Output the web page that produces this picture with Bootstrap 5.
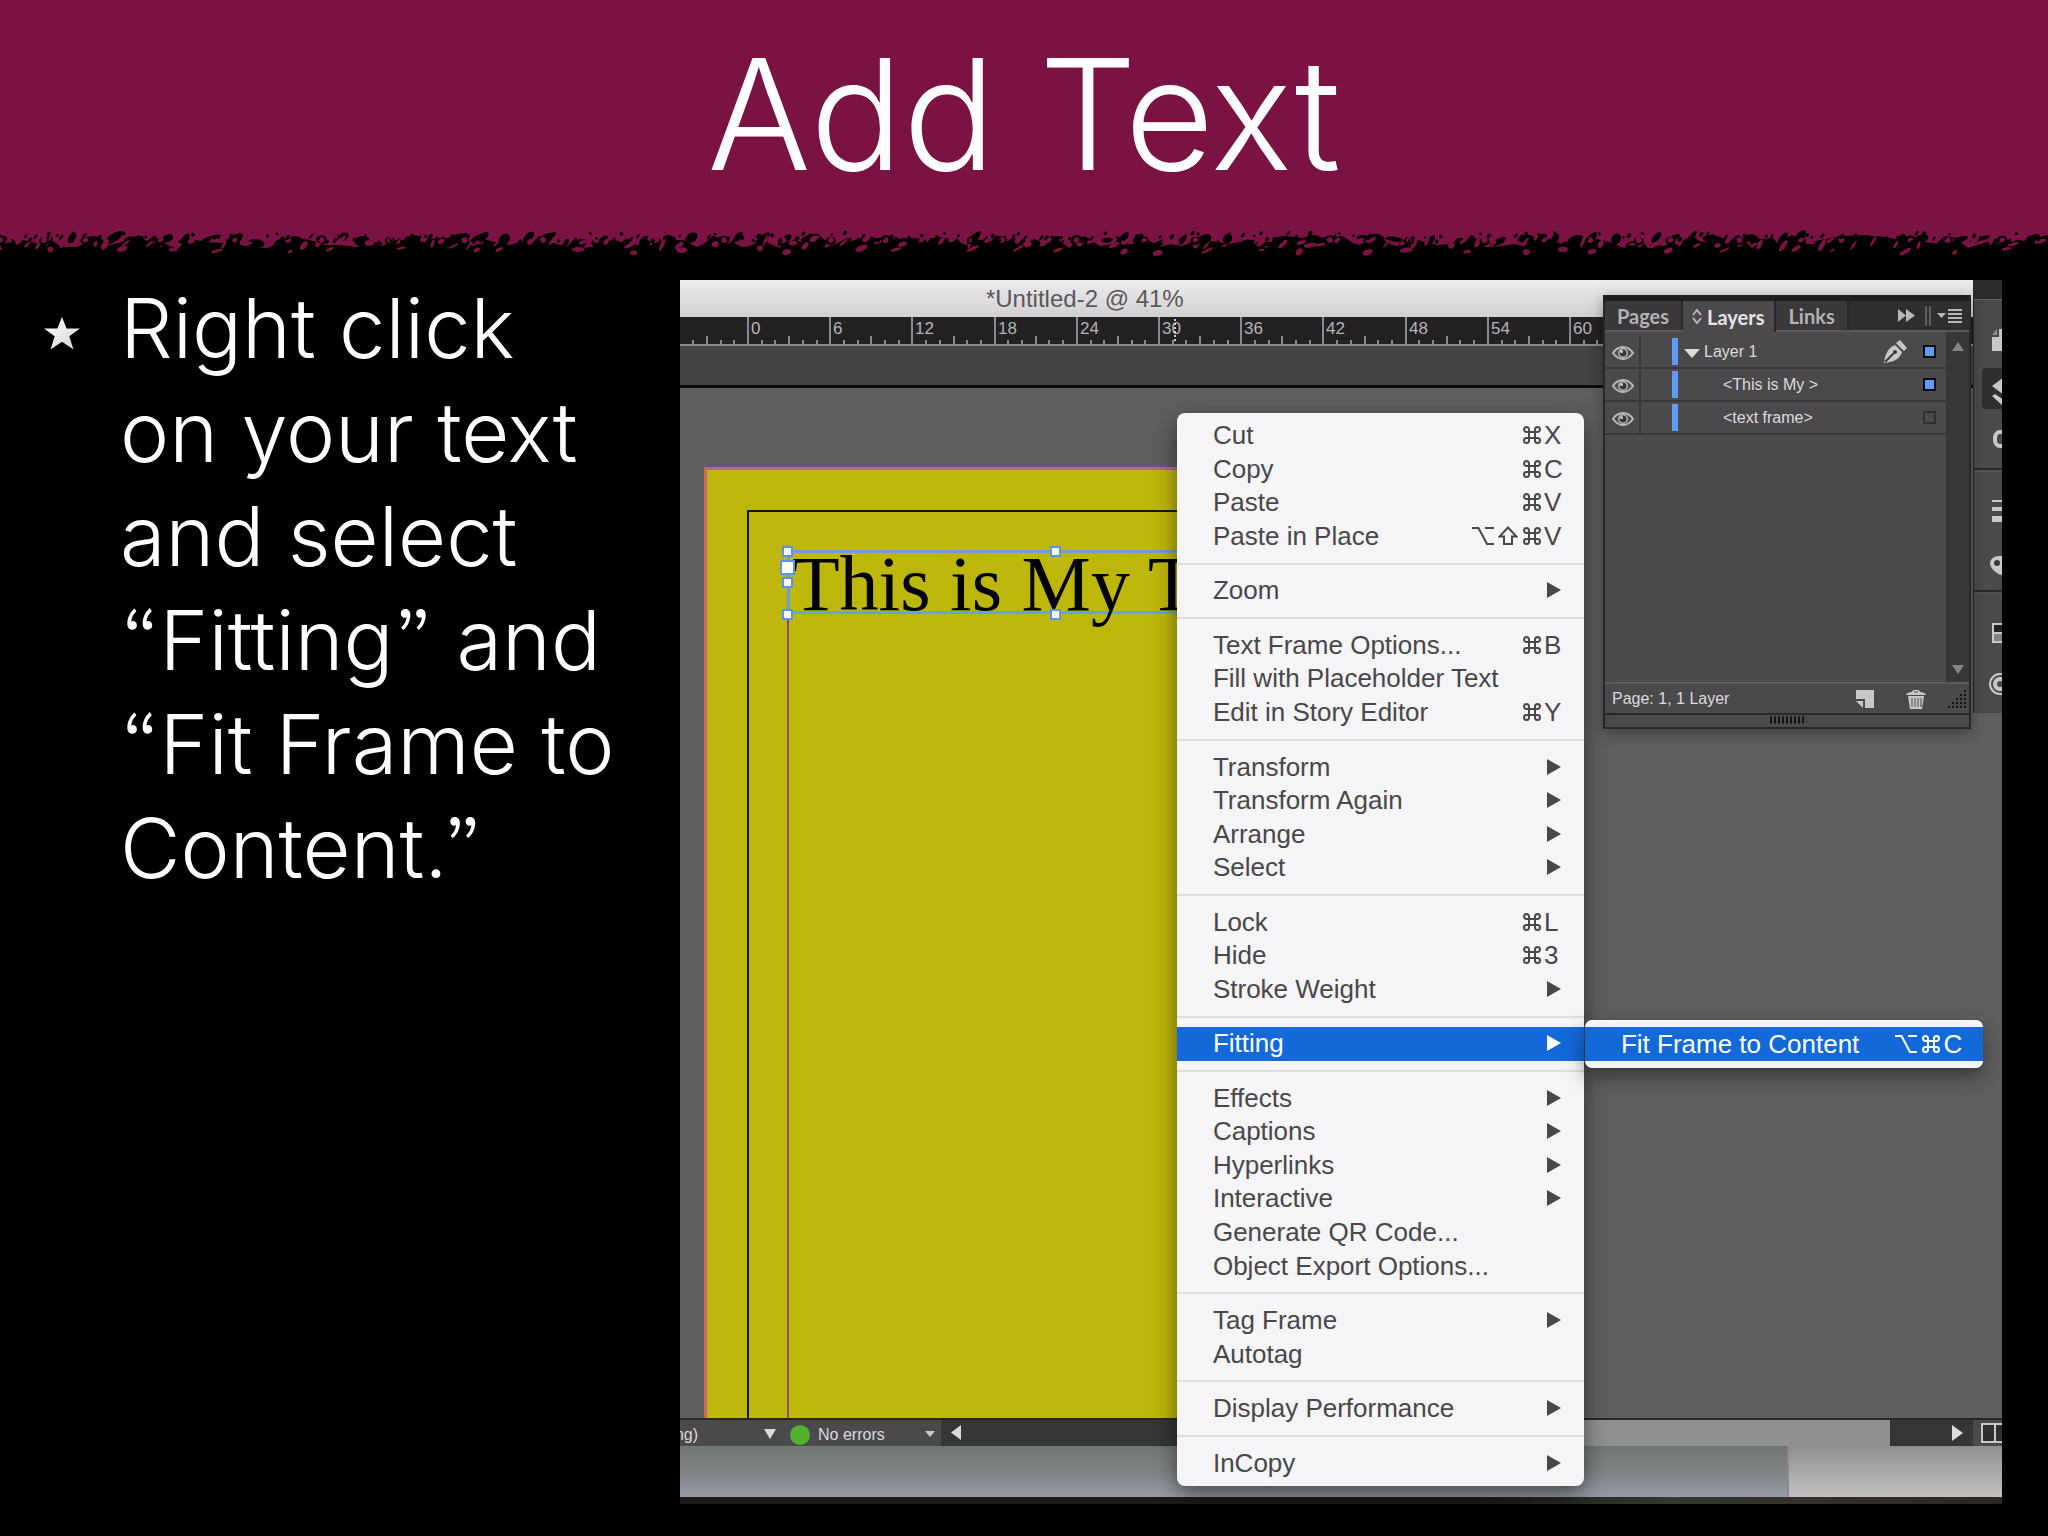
<!DOCTYPE html>
<html lang="en">
<head>
<meta charset="utf-8">
<meta name="viewport" content="width=device-width, initial-scale=1">
<title>Add Text</title>
<link href="https://cdn.jsdelivr.net/npm/bootstrap@5.3.0/dist/css/bootstrap.min.css" rel="stylesheet">
<style>
  body { background: #000; color: #fff; font-family: "Liberation Sans", Arial, sans-serif; min-height: 100vh; overflow-x: hidden; }
  svg { display: block; }
  .slide-head { background: #7a1244; }
  .slide-title { font-family: Inter, "Liberation Sans", sans-serif; font-weight: 300; font-size: 154px; line-height: 228px; }
  .torn-edge { width: 100%; height: 32px; }
  .slide-notes { width: 33.2%; padding: 16px 0 0 42px; }
  .slide-star { margin-top: 40px; width: 40px; flex: none; }
  .slide-text { font-family: Inter, "Liberation Sans", sans-serif; font-weight: 300; font-feature-settings: "ss03"; font-size: 83px; line-height: 104px; padding-left: 38px; white-space: nowrap; }
  .shot { height: 1224px; margin-top: 20px; margin-right: 46px; background: #605e61; overflow: hidden; min-width: 0; }

  .win-title { height: 37px; font-size: 24px; line-height: 38px; color: #5a585b; background: linear-gradient(#edebee, #d2d0d3); }
  .win-title span { padding-left: 306px; }
  .ruler { height: 29px; background: #232123; border-bottom: 2px solid #8b898c; overflow: hidden; }
  .ruler text { font-size: 17px; fill: #b5b3b6; }
  .ctrl-band { height: 42px; background: #444244; border-bottom: 3px solid #0c0b0d; }
  .dock { width: 29px; height: 433px; background: #4b494c; border-left: 1px solid #2a282b; overflow: hidden; }
  .dock-top { height: 20px; background: #2d2c2e; border-bottom: 1px solid #666; }

  .artboard { margin: 79px 0 0 24px; width: 500px; background: #bdb60b; border-left: 3px solid #cf6659; border-top: 3px solid #b0679a; padding: 40px 0 0 40px; }
  .page-margin { border-left: 2px solid #14130a; border-top: 2px solid #14130a; padding: 38px 0 0 38px; height: 100%; }
  .page-column { border-left: 2px solid #964c66; height: 100%; }
  .text-frame { margin-left: -2px; height: 64px; padding-left: 2px; border: 3px solid #6c9fe0; font-family: "Liberation Serif", "Times New Roman", serif; font-size: 78px; line-height: 62px; color: #000; white-space: nowrap; }
  .grip-box { position: absolute; width: 11px; height: 11px; background: #fff; border: 2px solid #5b93e6; }
  .grip-wide { width: 15px; height: 15px; }

  .statusbar { height: 28px; background: #4b494c; border-top: 2px solid #29272a; font-size: 16px; color: #dcdadd; }
  .status-left { width: 261px; padding: 4px 6px 0 0; }
  .status-left button, .plain { background: none; border: 0; padding: 0; color: inherit; }
  .status-left .cut { margin-left: -5px; }
  .status-dot { width: 20px; height: 20px; border-radius: 50%; background: #55b02e; }
  .hscroll { background: #373538; padding: 0 10px; }
  .hthumb { background: #918f92; width: 420px; margin-right: 62px; }
  .desk { height: 51px; background: linear-gradient(#707676, #7f8384 50%, #979ba6); }
  .desk-light { width: 215px; background: linear-gradient(#908e91, #aaa8ab 50%, #c2c0c3); border-left: 2px solid #8a8a8e; }
  .desk-foot { height: 7px; background: linear-gradient(90deg, #1e1819 60%, #37382f 75%, #332c2a 90%, #2c2825); }

  .panel { position: absolute; top: 15px; right: 31px; width: 368px; background: #4b494c; border: 2px solid #29272a; border-top: 6px solid #1f1e20; box-shadow: 0 4px 14px rgba(0,0,0,.35); color: #dcdadd; font-size: 16px; }
  .panel-tabs { height: 31px; background: #302e31; border-bottom: 2px solid #5a585b; font-family: Lato, "Liberation Sans", sans-serif; font-weight: 700; font-size: 20px; line-height: 28px; }
  .panel-tabs button { background: #3a383b; border: 0; border-right: 2px solid #29272a; color: #b3b1b4; font: inherit; padding: 0 12px; height: 29px; }
  .panel-tabs button.on { background: #4b494c; color: #e6e4e7; height: 31px; padding: 0 10px 0 8px; }
  .layer-list { padding-top: 4px; }
  .layer-row { height: 33px; border-bottom: 2px solid #39373a; }
  .eye-cell { width: 36px; border-right: 2px solid #39373a; padding: 6px 0 0 7px; }
  .layer-bar { width: 6px; height: 27px; margin: 0 1px 0 31px; background: #5c9cfb; }
  .layer-name { padding-left: 44px; }
  .sel-box { width: 13px; height: 13px; background: #5c9cfb; border: 2px solid #0b0a10; margin-right: 10px; }
  .sel-box.off { background: none; border-color: #302e31; }
  .layer-space { height: 247px; }
  .vscroll { width: 23px; background: #39373a; padding: 10px 0 8px; }
  .panel-foot { height: 31px; border-top: 2px solid #5c5a5d; padding: 0 3px 0 7px; }
  .foot-trash { margin: 0 22px 0 32px; }
  .panel-grip { height: 14px; border-top: 2px solid #29272a; }

  .ctx { position: absolute; top: 133px; bottom: 18px; left: 497px; width: 407px; padding: 6px 0; border: 0; border-radius: 8px; background: #f5f4f6; box-shadow: 0 8px 22px rgba(0,0,0,.5); font-size: 26px; color: #49474a; }
  .ctx li { min-height: 0; }
  .ctx .it { flex: 67 1 0; }
  .ctx .sep { flex: 42 1 0; }
  .ctx .sep::before { content: ""; height: 2px; width: 100%; background: #dfdde0; }
  .ctx button, .sub button { border: 0; background: none; color: inherit; width: 100%; height: 100%; padding: 0 20px 1px 36px; line-height: 32px; }
  .ctx .hot button, .sub button { background: #1369da; color: #fff; }
  .ctx kbd, .sub kbd { background: none; color: inherit; padding: 0; font: inherit; border-radius: 0; display: flex; }
  .ctx kbd i, .sub kbd i { font-style: normal; width: 22px; padding-left: 2px; }
  .arrow { margin-right: 3px; }
  .sub { position: absolute; top: 740px; left: 905px; width: 398px; height: 48px; padding: 7px 0; border: 0; border-radius: 7px; background: #f5f4f6; box-shadow: 0 8px 20px rgba(0,0,0,.45); font-size: 26px; color: #fff; }
</style>
<script src="https://cdn.jsdelivr.net/npm/bootstrap@5.3.0/dist/js/bootstrap.bundle.min.js"></script>
</head>
<body>
<svg width="0" height="0" class="position-absolute" aria-hidden="true">
  <symbol id="eye" viewBox="0 0 22 18">
    <path d="M1 9C4 4.500 7.500 3 11 3s7 1.500 10 6c-3 4.200-6.500 6-10 6S4 13.200 1 9z" fill="none" stroke="#b9b7ba" stroke-width="2"/>
    <circle cx="11" cy="9" r="5" fill="#b9b7ba"/><circle cx="11" cy="9" r="3.500" fill="#39373a"/><circle cx="9.500" cy="7.500" r="1.500" fill="#d0ced1"/>
  </symbol>
  <symbol id="cmd" viewBox="0 0 20 20">
    <path d="M7 7V4.500A2.500 2.500 0 1 0 4.500 7h11A2.500 2.500 0 1 0 13 4.500v11a2.500 2.500 0 1 0 2.500-2.500h-11A2.500 2.500 0 1 0 7 15.500z" fill="none" stroke="currentColor" stroke-width="2"/>
  </symbol>
  <symbol id="opt" viewBox="0 0 22 20"><path d="M0 2h6.500L15 18h7M13 2h9" fill="none" stroke="currentColor" stroke-width="2"/></symbol>
  <symbol id="shift" viewBox="0 0 20 20"><path d="M10 1.500L18.500 10.500H14V18H6v-7.500H1.500z" fill="none" stroke="currentColor" stroke-width="2"/></symbol>
</svg>

<header class="slide-head text-center">
  <h1 class="slide-title m-0">Add Text</h1>
</header>
<svg class="torn-edge" id="torn" viewBox="0 0 2048 32" preserveAspectRatio="none" aria-hidden="true"></svg>

<main class="d-flex align-items-start">
  <section class="slide-notes d-flex flex-shrink-0">
    <svg class="slide-star" viewBox="0 0 40 36" height="36" aria-hidden="true">
      <defs><linearGradient id="sg" x1="0" y1="0" x2="1" y2="1"><stop offset="0" stop-color="#fff"/><stop offset="1" stop-color="#d4d2d6"/></linearGradient></defs>
      <path d="M20 1l4.600 11.400H38L27.300 20.200 31.500 33.500 20 25.800 8.500 33.500 12.700 20.200 2 12.400h13.400z" fill="url(#sg)"/>
    </svg>
    <p class="slide-text m-0">Right click<br>on your text<br>and select<br>“Fitting” and<br>“Fit Frame to<br>Content.”</p>
  </section>

  <section class="shot position-relative flex-grow-1 d-flex flex-column">
    <div class="d-flex flex-grow-1">
      <div class="d-flex flex-column flex-grow-1 overflow-hidden">
        <div class="win-title"><span>*Untitled-2 @ 41%</span></div>
        <div class="ruler"><svg id="ruler" width="1300" height="27" role="img" aria-label="Ruler"></svg></div>
        <div class="ctrl-band"></div>
        <div class="artboard flex-grow-1">
          <div class="page-margin"><div class="page-column">
            <div class="text-frame position-relative">This is My T
              <span class="grip-box" style="left:-8px;top:-7px"></span>
              <span class="grip-box" style="left:260px;top:-7px"></span>
              <span class="grip-box" style="left:-8px;top:24px"></span>
              <span class="grip-box grip-wide" style="left:-10px;top:7px"></span>
              <span class="grip-box" style="left:-8px;top:56px"></span>
              <span class="grip-box" style="left:260px;top:56px"></span>
            </div>
          </div></div>
        </div>
      </div>
      <aside class="dock flex-shrink-0">
        <div class="dock-top"></div>
        <svg width="29" height="412" aria-hidden="true">
          <g fill="#c9c7ca">
            <path d="M25 29h6v22H18V37h7z"/><path d="M18 35l5-6v6z" fill="#908e91"/>
            <path d="M13 68h-1a4 4 0 0 0-4 4v33a4 4 0 0 0 4 4h18V68z" fill="#302e31"/>
            <path d="M18 86l12-9v18zM18 96l3-2 9 6v4l-2 1z"/>
            <path d="M30 130h-4a7 8 0 0 0-7 8v2a7 8 0 0 0 7 8h4v-4h-4a3 4 0 0 1-3-4v-2a3 4 0 0 1 3-4h4z"/>
            <path d="M18 200h12v2H18zM18 207h12v4H18zM18 216h12v6H18z"/>
            <path d="M30 256h-5a9 7 0 0 0-9 7c0 5 6 11 12 12h2z"/><circle cx="23" cy="263" r="3" fill="#39373a"/>
            <path d="M18 323h12v20H18z"/><path d="M20 325h10v7H20z" fill="#252326"/><path d="M20 334h10v7H20z" fill="#858386"/>
          </g>
          <path d="M0 169h29M0 291h29" stroke="#29272a" stroke-width="2"/><path d="M0 171h29M0 293h29" stroke="#5f5d60"/>
          <circle cx="26" cy="384" r="10" fill="none" stroke="#c9c7ca" stroke-width="2"/><circle cx="26" cy="384" r="5" fill="none" stroke="#c9c7ca" stroke-width="4"/>
        </svg>
      </aside>
    </div>

    <div class="statusbar d-flex flex-shrink-0">
      <div class="status-left d-flex align-items-center flex-shrink-0">
        <button class="cut d-flex align-items-center" type="button" aria-label="Preflight profile">ng)
          <svg class="ms-5" width="36" height="12" aria-hidden="true"><path d="M18 0h12l-6 10z" fill="#dcdadd"/></svg></button>
        <span class="status-dot ms-2"></span>
        <button class="d-flex align-items-center flex-grow-1 justify-content-between ms-2" type="button">No errors
          <svg width="10" height="9" aria-hidden="true"><path d="M0 0h10L5 6z" fill="#c9c7ca"/></svg></button>
      </div>
      <div class="hscroll d-flex flex-grow-1 align-items-stretch">
        <svg class="align-self-center" width="10" height="16" aria-hidden="true"><path d="M10 0v15L0 7.500z" fill="#dcdadd"/></svg>
        <div class="hthumb ms-auto"></div>
        <svg class="align-self-center" width="11" height="16" aria-hidden="true"><path d="M0 0v16l11-8z" fill="#dcdadd"/></svg>
      </div>
      <svg width="29" height="26" class="flex-shrink-0" aria-hidden="true"><path d="M9 4h24v18H9zM22 4v18" fill="#302e31" stroke="#c9c7ca" stroke-width="2"/></svg>
    </div>
    <div class="desk d-flex justify-content-end flex-shrink-0"><div class="desk-light"></div></div>
    <div class="desk-foot flex-shrink-0"></div>

    <div class="panel">
      <div class="panel-tabs d-flex" role="tablist">
        <button role="tab" type="button">Pages</button>
        <button class="on d-flex align-items-center gap-1" role="tab" type="button" aria-selected="true"><svg width="12" height="17" aria-hidden="true"><path d="M2 7l4-5 4 5M2 10l4 5 4-5" fill="none" stroke="#b9b7ba" stroke-width="2"/></svg>Layers</button>
        <button role="tab" type="button">Links</button>
        <svg class="ms-auto me-1" width="69" height="29" aria-hidden="true">
          <path d="M2 8l8 6.500L2 21zM10 8l9 6.500L10 21z" fill="#b9b7ba"/><path d="M30 5v20M34 5v20" stroke="#5f5d60" stroke-width="2"/>
          <path d="M41 12h9l-4.500 5z" fill="#b9b7ba"/><path d="M52 9h14M52 13h14M52 17h14M52 21h14" stroke="#b9b7ba" stroke-width="2"/></svg>
      </div>
      <div class="d-flex">
        <div class="layer-list flex-grow-1">
          <div class="layer-row d-flex align-items-center">
            <div class="eye-cell align-self-stretch"><svg width="22" height="22"><use href="#eye"/></svg></div><span class="layer-bar"></span>
            <svg class="mx-1" width="17" height="17" aria-hidden="true"><path d="M1 6h16l-8 9z" fill="#dcdadd"/></svg><span>Layer 1</span>
            <svg class="ms-auto me-3" width="24" height="26" aria-hidden="true">
              <path d="M1 24C2 15 5 9 12 6l7 7c-2 7-8 10-18 11z" fill="#c9c7ca"/><path d="M2 23l9-9" stroke="#39373a" stroke-width="2"/><circle cx="12" cy="13" r="2" fill="#39373a"/>
              <path d="M13 4l4-3 7 8-3 3z" fill="#c9c7ca"/></svg>
            <span class="sel-box"></span>
          </div>
          <div class="layer-row d-flex align-items-center">
            <div class="eye-cell align-self-stretch"><svg width="22" height="22"><use href="#eye"/></svg></div><span class="layer-bar"></span>
            <span class="layer-name">&lt;This is My &gt;</span><span class="sel-box ms-auto"></span>
          </div>
          <div class="layer-row d-flex align-items-center">
            <div class="eye-cell align-self-stretch"><svg width="22" height="22"><use href="#eye"/></svg></div><span class="layer-bar"></span>
            <span class="layer-name">&lt;text frame&gt;</span><span class="sel-box off ms-auto"></span>
          </div>
          <div class="layer-space"></div>
        </div>
        <div class="vscroll d-flex flex-column justify-content-between align-items-center">
          <svg width="12" height="9" aria-hidden="true"><path d="M0 9h12L6 0z" fill="#858386"/></svg>
          <svg width="12" height="9" aria-hidden="true"><path d="M0 0h12L6 9z" fill="#858386"/></svg>
        </div>
      </div>
      <div class="panel-foot d-flex align-items-center">
        <span class="me-auto">Page: 1, 1 Layer</span>
        <button class="plain" type="button" aria-label="New layer"><svg width="18" height="18"><path d="M0 0h18v18H9V9H0z" fill="#c9c7ca"/><path d="M0 11h7v7z" fill="#c9c7ca"/></svg></button>
        <button class="plain foot-trash" type="button" aria-label="Delete layer"><svg width="20" height="20"><path d="M0 6c1-2 3-3 6-3 0-3 8-3 8 0 3 0 5 1 6 3zM2 7h16l-2 13H4z" fill="#c9c7ca"/><path d="M6 9v9M9 9v9M12 9v9M15 9v9" stroke="#4b494c"/><path d="M8 3h4" stroke="#4b494c"/></svg></button>
        <svg id="resize" width="18" height="18" aria-hidden="true"></svg>
      </div>
      <div class="panel-grip"><svg class="mx-auto" width="36" height="12" aria-hidden="true"><path d="M1 5h35" stroke="#131214" stroke-width="7" stroke-dasharray="2 2"/></svg></div>
    </div>

    <ul class="ctx list-unstyled d-flex flex-column m-0" id="menu"></ul>
    <div class="sub">
      <button class="d-flex justify-content-between align-items-center" type="button">Fit Frame to Content
        <kbd class="align-items-center"><svg class="me-1" width="22" height="20"><use href="#opt"/></svg><svg width="20" height="20"><use href="#cmd"/></svg><i>C</i></kbd></button>
    </div>
  </section>
</main>

<script>
  // Context menu entries: label, then ">" for a submenu or the shortcut keys; null is a separator.
  const entries = [["Cut","cX"],["Copy","cC"],["Paste","cV"],["Paste in Place","oscV"],null,["Zoom",">"],null,
    ["Text Frame Options...","cB"],["Fill with Placeholder Text",""],["Edit in Story Editor","cY"],null,
    ["Transform",">"],["Transform Again",">"],["Arrange",">"],["Select",">"],null,
    ["Lock","cL"],["Hide","c3"],["Stroke Weight",">"],null,["Fitting",">"],null,
    ["Effects",">"],["Captions",">"],["Hyperlinks",">"],["Interactive",">"],["Generate QR Code...",""],["Object Export Options...",""],null,
    ["Tag Frame",">"],["Autotag",""],null,["Display Performance",">"],null,["InCopy",">"]];
  const icons = {
    c: '<svg width="20" height="20"><use href="#cmd"/></svg>',
    o: '<svg class="me-1" width="22" height="20"><use href="#opt"/></svg>',
    s: '<svg class="me-1" width="20" height="20"><use href="#shift"/></svg>'
  };
  document.getElementById("menu").innerHTML = entries.map(e => {
    if (!e) return '<li class="sep d-flex align-items-center" role="separator"></li>';
    let right = "";
    if (e[1] === ">") right = '<svg class="arrow" width="14" height="18"><path d="M0 1v16l14-8z" fill="currentColor"/></svg>';
    else if (e[1]) right = '<kbd class="align-items-center">' + [...e[1]].map(k => icons[k] || "<i>" + k + "</i>").join("") + "</kbd>";
    return '<li class="it' + (e[0] === "Fitting" ? " hot" : "") + '"><button type="button" class="d-flex justify-content-between align-items-center text-start">' + e[0] + right + "</button></li>";
  }).join("");

  // Ruler ticks, one per pica
  let r = "";
  for (let n = -4; n < 64; n++) {
    const x = Math.round(68 + n * 13.7), h = n % 6 === 0 ? 27 : n % 3 === 0 ? 8 : 4;
    r += `<path d="M${x} 27v-${h}" stroke="#8b898c" stroke-width="2"/>`;
    if (n >= 0 && n % 6 === 0) r += `<text x="${x + 3}" y="17">${n}</text>`;
  }
  r += '<path d="M495 2v24" stroke="#d0ced1" stroke-width="2" stroke-dasharray="2 2"/>';
  document.getElementById("ruler").innerHTML = r;

  // Resize handle dots
  let d = "";
  for (let i = 0; i < 5; i++) for (let j = 4 - i; j < 5; j++) d += `<rect x="${j * 4}" y="${i * 4}" width="2" height="2" fill="#131214"/>`;
  document.getElementById("resize").innerHTML = d;

  // Torn paint edge of the header: a wandering border, then strokes, rings and specks of both colours
  let seed = 77;
  const rnd = () => (seed = (seed * 16807) % 2147483647) / 2147483647;
  const M = "#7a1244", K = "#000";
  const blob = (x, y, w, h, a, c) => `<ellipse cx="${x.toFixed(1)}" cy="${y.toFixed(1)}" rx="${w.toFixed(1)}" ry="${h.toFixed(1)}" transform="rotate(${a.toFixed(0)} ${x.toFixed(1)} ${y.toFixed(1)})" fill="${c}"/>`;
  let edge = "M0 0H2048V14";
  for (let x = 2048; x > -20; x -= 5 + rnd() * 14) edge += `L${x.toFixed(0)} ${(7 + rnd() * 13).toFixed(0)}`;
  let t = `<path d="${edge}V0z" fill="${M}"/>`;
  for (let x = 0; x < 2048; x += 12 + rnd() * 16) t += blob(x, 9 + rnd() * 8, 5 + rnd() * 6, 2 + rnd() * 3, -60 + rnd() * 70, K);
  for (let x = 0; x < 2048; x += 8 + rnd() * 16) t += blob(x, 10 + rnd() * 8, 3 + rnd() * 4, 1 + rnd() * 2, -75 + rnd() * 70, M);
  for (let x = 0; x < 2048; x += 30 + rnd() * 50) t += blob(x, 11 + rnd() * 4, 5, 4, 0, K) + blob(x, 12, 3, 2 + rnd(), -30, M);
  for (let x = 0; x < 2048; x += 4 + rnd() * 12) t += blob(x, 5 + rnd() * 9, 1 + rnd() * 2, 1 + rnd(), -50, K);
  for (let x = 0; x < 2048; x += 20 + rnd() * 60) t += blob(x, 20 + rnd() * 5, 2 + rnd() * 5, 1 + rnd() * 2, -40 + rnd() * 40, M);
  document.getElementById("torn").innerHTML = t;
</script>
</body>
</html>
